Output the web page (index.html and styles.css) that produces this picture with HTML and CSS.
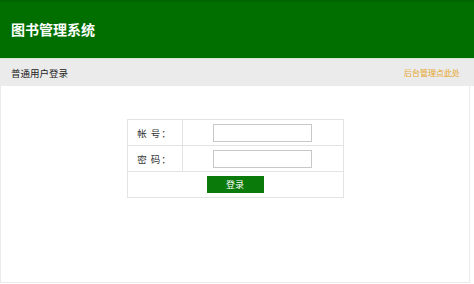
FILE: index.html
```html
<!DOCTYPE html>
<html lang="zh-CN">
<head>
  <meta charset="UTF-8">
  <title>图书管理系统</title>
  <link rel="stylesheet" href="styles.css">
</head>
<body>
  <div class="header">
    <h1>图书管理系统</h1>
  </div>
  <div class="subbar">
    <span class="subtitle">普通用户登录</span>
    <a href="#" class="admin-link">后台管理点此处</a>
  </div>
  <div class="panel">
    <form class="login-form">
      <table class="login">
        <tr>
          <td class="label">帐 号：</td>
          <td class="field"><input type="text"></td>
        </tr>
        <tr>
          <td class="label">密 码：</td>
          <td class="field"><input type="password"></td>
        </tr>
        <tr>
          <td colspan="2" class="actions"><button type="submit">登录</button></td>
        </tr>
      </table>
    </form>
  </div>
</body>
</html>
```

FILE: styles.css
```css
body {
  margin: 0;
  font-family: "Noto Sans CJK SC", "Liberation Sans", sans-serif;
  background: #fff;
}

.header {
  height: 58px;
  background: #006f00;
  border-top: 2px solid #006400;
  box-sizing: border-box;
  display: flex;
  align-items: center;
  padding: 0 0 3px 11px;
}
.header h1 {
  margin: 0;
  font-size: 14px;
  font-weight: bold;
  color: #fff;
}

.subbar {
  height: 28px;
  box-sizing: border-box;
  border-top: 1px solid #cfe6cf;
  background: #ebebeb;
  display: flex;
  align-items: center;
  justify-content: space-between;
  padding: 0 14px 0 11px;
}
.subtitle {
  font-size: 9.5px;
  color: #222;
}
.admin-link {
  font-size: 8px;
  color: #e5a52a;
  text-decoration: none;
}

.panel {
  width: 470px;
  height: 197px;
  box-sizing: border-box;
  border: 1px solid #eaeaea;
  border-top: none;
  padding-top: 33px;
}

.login {
  margin: 0 auto;
  border-collapse: collapse;
  width: 217px;
}
.login td {
  border: 1px solid #e3e3e3;
  height: 25px;
  padding: 0;
  font-size: 9.5px;
  color: #333;
}
.login .label {
  width: 54px;
  text-align: center;
  letter-spacing: 1px;
}
.login .field {
  text-align: center;
}
.login input {
  width: 99px;
  height: 18px;
  box-sizing: border-box;
  border: 1px solid #c8c8c8;
  display: block;
  margin: 0 auto;
}
.login .actions {
  text-align: center;
}
.login button {
  width: 57px;
  height: 17px;
  background: #0a7a0a;
  border: none;
  color: #fff;
  font-size: 9px;
  font-family: inherit;
  padding: 0;
  vertical-align: middle;
}
```
